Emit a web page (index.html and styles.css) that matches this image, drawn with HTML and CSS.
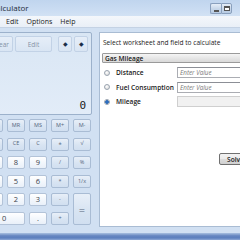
FILE: index.html
```html
<!DOCTYPE html>
<html>
<head>
<meta charset="utf-8">
<link rel="stylesheet" href="styles.css">
</head>
<body>
<div class="window">
  <div class="titlebar">
    <span class="title">Calculator</span>
    <div class="caption">
      <span class="cbtn min"><i></i></span>
      <span class="cbtn max"><i></i></span>
    </div>
  </div>
  <div class="menubar"><span>Edit</span><span>Options</span><span>Help</span></div>
  <div class="main">
    <div class="calc">
      <div class="display">
        <div class="hist">
          <span class="hbtn clear">Clear</span>
          <span class="hbtn edit">Edit</span>
          <span class="hbtn arrow">&#9670;</span>
          <span class="hbtn arrow">&#9670;</span>
        </div>
        <div class="value">0</div>
      </div>
      <div class="keys">
        <span class="key op">MC</span>
        <span class="key op">MR</span>
        <span class="key op">MS</span>
        <span class="key op">M+</span>
        <span class="key op">M-</span>
        <span class="key op">&#8592;</span>
        <span class="key op">CE</span>
        <span class="key op">C</span>
        <span class="key op">&#177;</span>
        <span class="key op">&#8730;</span>
        <span class="key num">7</span>
        <span class="key num">8</span>
        <span class="key num">9</span>
        <span class="key op">/</span>
        <span class="key op">%</span>
        <span class="key num">4</span>
        <span class="key num">5</span>
        <span class="key num">6</span>
        <span class="key op">*</span>
        <span class="key op">1/x</span>
        <span class="key num">1</span>
        <span class="key num">2</span>
        <span class="key num">3</span>
        <span class="key op">-</span>
        <span class="key op eq">=</span>
        <span class="key num zero">0</span>
        <span class="key num">.</span>
        <span class="key op">+</span>
      </div>
    </div>
    <div class="sheet">
      <div class="prompt">Select worksheet and field to calculate</div>
      <div class="select">Gas Mileage</div>
      <div class="fields">
        <div class="field">
          <span class="radio"></span><span class="label">Distance</span>
          <span class="input"><em>Enter Value</em></span>
        </div>
        <div class="field">
          <span class="radio"></span><span class="label">Fuel Consumption</span>
          <span class="input"><em>Enter Value</em></span>
        </div>
        <div class="field">
          <span class="radio checked"></span><span class="label">Mileage</span>
          <span class="input disabled"></span>
        </div>
      </div>
      <span class="solve">Solve</span>
    </div>
  </div>
  <div class="bottom"></div>
</div>
</body>
</html>
```

FILE: styles.css
```css
* { box-sizing: border-box; }
html, body { margin: 0; padding: 0; }
body {
  width: 240px;
  height: 240px;
  overflow: hidden;
  font-family: "Segoe UI", "Open Sans", "Noto Sans", sans-serif;
  background: #d1e0f2;
}
.window {
  width: 240px;
  height: 240px;
  display: flex;
  flex-direction: column;
  overflow: hidden;
}
.titlebar {
  height: 16px;
  flex: none;
  display: flex;
  align-items: center;
  background: linear-gradient(#c0d5ee, #cadcf2 60%, #d2e2f4);
}
.title {
  margin-left: -9px;
  font-size: 8px;
  color: #1e2a3a;
  line-height: 1;
  margin-top: -1px;
}
.caption {
  margin-left: auto;
  display: flex;
  align-self: flex-start;
  margin-top: 3px;
  margin-right: 8px;
}
.cbtn {
  width: 11px;
  height: 11px;
  border: 1px solid #8aa0bd;
  background: linear-gradient(#e6eef8, #c9d8ea 50%, #b7cbe3);
  display: flex;
  align-items: center;
  justify-content: center;
}
.cbtn.min { border-radius: 2px 0 0 2px; border-right: none; }
.cbtn.max { border-radius: 0 2px 2px 0; }
.cbtn.min i { width: 5px; height: 2px; background: #fff; border: 0.5px solid #555; margin-top: 4px; }
.cbtn.max i { width: 6px; height: 5px; border: 1px solid #555; border-top-width: 2px; background: #fff; }

.menubar {
  height: 12px;
  flex: none;
  display: flex;
  align-items: center;
  gap: 8px;
  padding-left: 6px;
  font-size: 7px;
  color: #1a1a1a;
  background: linear-gradient(#f4f7fb, #e9eff7);
  border-bottom: 1px solid #c4d2e4;
}

.main {
  flex: 1;
  display: flex;
  padding-top: 4px;
  min-height: 0;
}
.calc {
  flex: none;
  width: 111px;
  margin-left: -19px;
  display: flex;
  flex-direction: column;
}
.display {
  height: 83px;
  border: 1px solid #9cb1cb;
  border-radius: 2px;
  background: linear-gradient(#d9e6f4, #e2ecf8);
  display: flex;
  flex-direction: column;
  padding: 3px 3px 4px 3px;
}
.hist {
  display: flex;
  height: 16px;
}
.hbtn {
  height: 16px;
  display: flex;
  align-items: center;
  justify-content: center;
  font-size: 6.5px;
  color: #8592a4;
  background: linear-gradient(#e6eef8, #d9e5f3);
  border: 1px solid #c2d2e6;
  border-radius: 2px;
}
.hbtn.clear { width: 28px; justify-content: flex-end; padding-right: 3px; }
.hbtn.edit { width: 37px; margin-left: 2px; }
.hbtn.arrow { width: 14px; margin-left: 6px; font-size: 6px; color: #1a2d4a; }
.hbtn.arrow + .hbtn.arrow { margin-left: 2px; }
.value {
  margin-top: auto;
  text-align: right;
  padding-right: 2px;
  font-family: "DejaVu Sans Mono", monospace;
  font-size: 11px;
  line-height: 9px;
  color: #1a1a1a;
}
.keys {
  margin-top: 4px;
  margin-left: 4px;
  display: grid;
  grid-template-columns: repeat(5, 18px);
  grid-auto-rows: 13px;
  column-gap: 4px;
  row-gap: 5.6px;
}
.key {
  display: flex;
  align-items: center;
  justify-content: center;
  border-radius: 2px;
  line-height: 1;
}
.key.op {
  font-size: 5.5px;
  color: #56657c;
  background: linear-gradient(#e8eff8, #d8e4f2 55%, #d1dff0);
  border: 1px solid #a9bcd4;
}
.key.num {
  font-size: 7.5px;
  color: #3a3f48;
  background: linear-gradient(#ffffff, #f3f7fc 50%, #e9f0f9);
  border: 1px solid #b3c3d8;
}
.key.zero { grid-column: span 2; justify-content: flex-start; padding-left: 16px; }
.key.eq { grid-row: span 2; font-size: 11px; color: #56657c; }

.sheet {
  flex: none;
  width: 170px;
  height: 195px;
  margin-left: 7px;
  background: #ffffff;
  border: 1px solid #a9bcd3;
  display: flex;
  flex-direction: column;
  padding: 5px 0 0 2px;
}
.prompt {
  font-size: 6.6px;
  line-height: 10px;
  color: #1a1a1a;
  padding-left: 1px;
}
.select {
  margin-top: 5px;
  height: 10px;
  border: 1px solid #9a9a9a;
  border-radius: 1px;
  background: linear-gradient(#f5f5f5, #e6e6e6 50%, #d9d9d9);
  font-size: 6.6px;
  font-weight: 600;
  color: #1a1a1a;
  display: flex;
  align-items: center;
  padding-left: 2px;
}
.fields {
  margin-top: 4px;
  display: flex;
  flex-direction: column;
  gap: 3.5px;
}
.field {
  height: 11px;
  display: flex;
  align-items: center;
}
.radio {
  width: 6px;
  height: 6px;
  border-radius: 50%;
  border: 1px solid #9aa4b0;
  background: radial-gradient(circle at 40% 35%, #ffffff, #d4d4d4);
  margin-left: 2px;
  flex: none;
}
.radio.checked { background: radial-gradient(circle, #2c6dbf 0 1.6px, #e8e8e8 2px); }
.label {
  margin-left: 6px;
  width: 61px;
  font-size: 6.6px;
  font-weight: 600;
  color: #1a1a1a;
}
.input {
  flex: 1;
  height: 11px;
  border: 1px solid #abadb3;
  border-top-color: #8c8f96;
  display: flex;
  align-items: center;
  padding-left: 2px;
  background: #fff;
}
.input em {
  font-size: 6.3px;
  color: #7a7a7a;
}
.input.disabled { background: #f1f1f1; border-color: #cfcfcf; }
.solve {
  align-self: flex-start;
  margin-left: 117px;
  margin-top: 46px;
  width: 40px;
  height: 12px;
  border: 1px solid #707070;
  border-radius: 2px;
  background: linear-gradient(#f2f2f2, #ebebeb 50%, #dddddd 51%, #cfcfcf);
  font-size: 6.6px;
  font-weight: 600;
  color: #1a1a1a;
  display: flex;
  align-items: center;
  padding-left: 7px;
}
.bottom {
  height: 7px;
  flex: none;
  background: linear-gradient(#a9c0e0, #6686c0 40%, #5c7fbd 70%, #8fa9d6);
}
```
